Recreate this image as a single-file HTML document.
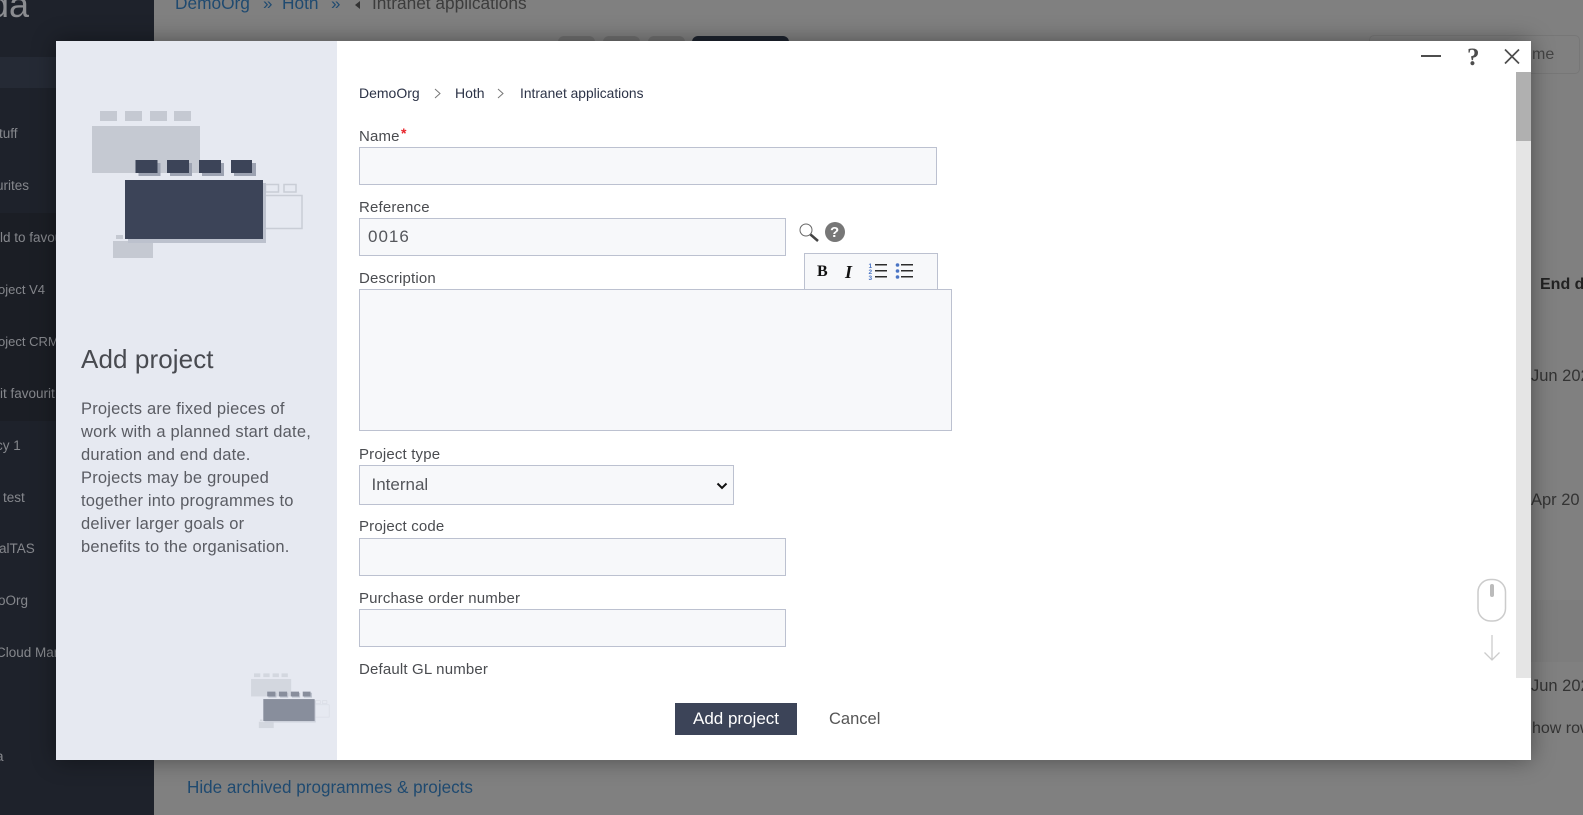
<!DOCTYPE html>
<html><head><meta charset="utf-8"><title>Add project</title>
<style>
html,body{margin:0;padding:0;width:1583px;height:815px;overflow:hidden;background:#808080;font-family:"Liberation Sans",sans-serif}
.a{position:absolute;white-space:nowrap;line-height:1}
#side{position:absolute;left:0;top:0;width:154px;height:815px;background:#1e222b;overflow:hidden}
#side .a{color:#85878c;font-size:13.5px}
.lab{position:absolute;left:359px;color:#4a4c50;font-size:15px;line-height:18px;white-space:nowrap;letter-spacing:.17px}
.inp{position:absolute;box-sizing:border-box;background:#f7f8fa;border:1px solid #bcc1d0}
.bc{position:absolute;top:85px;color:#2c3347;font-size:14px;line-height:16px;white-space:nowrap}
.p{position:absolute;left:81px;color:#5a5c63;font-size:16.5px;line-height:23px;white-space:nowrap;letter-spacing:.2px}
</style></head><body>
<div id="side">
<div style="position:absolute;left:0;top:57px;width:154px;height:31px;background:#252a35"></div>
<div style="position:absolute;left:0;top:213px;width:154px;height:208px;background:#1b1e25"></div>
<div class="a" style="left:-11px;top:-13px;font-size:36px;color:#8b8c90">da</div>
<div class="a" style="left:-1px;top:127px">tuff</div>
<div class="a" style="left:-4px;top:179px">urites</div>
<div class="a" style="left:0;top:231px">ld to favou</div>
<div class="a" style="left:-2px;top:283px;font-size:13px">oject V4</div>
<div class="a" style="left:-2px;top:335px;font-size:13px">oject CRM</div>
<div class="a" style="left:0;top:387px">it favourit</div>
<div class="a" style="left:-4px;top:439px">cy 1</div>
<div class="a" style="left:3px;top:491px">test</div>
<div class="a" style="left:-1px;top:542px">alTAS</div>
<div class="a" style="left:-2px;top:594px">oOrg</div>
<div class="a" style="left:-4px;top:646px">Cloud Man</div>
<div class="a" style="left:-4px;top:750px">a</div>
</div>

<!-- background page -->
<div class="a" style="left:175px;top:-5px;font-size:17.300px;color:#1f4a70">DemoOrg</div>
<div class="a" style="left:263px;top:-5px;font-size:17px;color:#1f4a70">»</div>
<div class="a" style="left:282px;top:-5px;font-size:17.300px;color:#1f4a70">Hoth</div>
<div class="a" style="left:331px;top:-5px;font-size:17px;color:#1f4a70">»</div>
<div class="a" style="left:372px;top:-5px;font-size:17.300px;color:#3c3c3c">Intranet applications</div>
<div style="position:absolute;left:355px;top:1px;width:0;height:0;border:4px solid transparent;border-right:5px solid #333;border-left:0"></div>
<div style="position:absolute;left:558px;top:36px;width:37px;height:10px;background:#707070;border-radius:6px 6px 0 0"></div>
<div style="position:absolute;left:603px;top:36px;width:37px;height:10px;background:#707070;border-radius:6px 6px 0 0"></div>
<div style="position:absolute;left:648px;top:36px;width:37px;height:10px;background:#707070;border-radius:6px 6px 0 0"></div>
<div style="position:absolute;left:692px;top:36px;width:97px;height:10px;background:#1d232e;border-radius:6px 6px 0 0"></div>
<div style="position:absolute;box-sizing:border-box;left:1369px;top:35px;width:211px;height:39px;border:1px solid #777;border-radius:5px"></div>
<div class="a" style="left:1532px;top:47px;font-size:16px;color:#444">me</div>
<div style="position:absolute;left:1531px;top:600px;width:52px;height:62px;background:#7d7d7d"></div>
<div style="position:absolute;left:0;top:760px;width:1583px;height:55px;background:#7b7b7b;z-index:-1"></div>
<div class="a" style="left:1540px;top:277px;font-size:16px;color:#222;font-weight:bold">End d</div>
<div class="a" style="left:1531px;top:368px;font-size:16.500px;color:#333">Jun 202</div>
<div class="a" style="left:1531px;top:492px;font-size:16.500px;color:#333">Apr 20</div>
<div class="a" style="left:1531px;top:678px;font-size:16.500px;color:#333">Jun 202</div>
<div class="a" style="left:1532px;top:721px;font-size:16px;color:#333">how row</div>
<div class="a" style="left:187px;top:779px;font-size:17.100px;color:#1f4a70">Hide archived programmes &amp; projects</div>

<!-- modal -->
<div style="position:absolute;left:56px;top:41px;width:1475px;height:719px;background:#fff;box-shadow:0 0 22px rgba(0,0,0,.4)"></div>
<div style="position:absolute;left:56px;top:41px;width:281px;height:719px;background:#e6e9f1"></div>

<div style="position:absolute;left:1516px;top:72px;width:15px;height:606px;background:#e5e5e5"></div>
<div style="position:absolute;left:1516px;top:72px;width:15px;height:69px;background:#b0b0b0"></div>

<div class="a" style="left:81px;top:346px;font-size:26px;color:#484a50;letter-spacing:.1px">Add project</div>
<div class="p" style="top:397.500px">Projects are fixed pieces of</div>
<div class="p" style="top:420.500px">work with a planned start date,</div>
<div class="p" style="top:443.500px">duration and end date.</div>
<div class="p" style="top:466.500px">Projects may be grouped</div>
<div class="p" style="top:489.500px">together into programmes to</div>
<div class="p" style="top:512.500px">deliver larger goals or</div>
<div class="p" style="top:535.500px">benefits to the organisation.</div>

<div class="bc" style="left:359px">DemoOrg</div>
<div class="bc" style="left:455px">Hoth</div>
<div class="bc" style="left:520px;top:86px;font-size:13.800px">Intranet applications</div>

<div class="lab" style="top:128px">Name<span style="position:absolute;left:42px;top:-4px;color:#e8252b;font-size:14px;font-weight:bold">*</span></div>
<div class="inp" style="left:359px;top:147px;width:578px;height:38px"></div>
<div class="lab" style="top:199px">Reference</div>
<div class="inp" style="left:359px;top:218px;width:427px;height:38px"></div>
<div class="a" style="left:368px;top:228px;font-size:17px;color:#55575c;letter-spacing:1px">0016</div>
<div class="lab" style="top:270px">Description</div>
<div class="inp" style="left:804px;top:253px;width:134px;height:38px"></div>
<div class="inp" style="left:359px;top:289px;width:593px;height:142px"></div>
<div class="a" style="left:817px;top:264px;font-size:16px;font-weight:bold;color:#111;font-family:'Liberation Serif',serif">B</div>
<div class="a" style="left:845px;top:263px;font-size:18px;font-weight:bold;font-style:italic;color:#111;font-family:'Liberation Serif',serif">I</div>

<div class="lab" style="top:446px">Project type</div>
<div class="inp" style="left:359px;top:465px;width:375px;height:40px"></div>
<div class="a" style="left:371.500px;top:476px;font-size:17px;color:#55575c">Internal</div>
<div class="lab" style="top:518px">Project code</div>
<div class="inp" style="left:359px;top:538px;width:427px;height:38px"></div>
<div class="lab" style="top:590px">Purchase order number</div>
<div class="inp" style="left:359px;top:609px;width:427px;height:38px"></div>
<div class="lab" style="top:661px">Default GL number</div>

<svg style="position:absolute;left:0;top:0" width="1583" height="815" viewBox="0 0 1583 815">
<defs><g id="lego">
<g fill="#c5c9d2"><rect x="100" y="111" width="17" height="10"/><rect x="125" y="111" width="17" height="10"/><rect x="150" y="111" width="17" height="10"/><rect x="174" y="111" width="17" height="10"/>
<rect x="92" y="126" width="108" height="47"/><rect x="113" y="241" width="40" height="17"/><rect x="116" y="235" width="7" height="4"/></g>
<g fill="none" stroke="#c9cdd6" stroke-width="1.500"><rect x="255" y="195.500" width="47" height="33"/><rect x="265.500" y="184.500" width="13" height="7.500"/><rect x="284" y="184.500" width="12" height="7.500"/></g>
<g fill="#9da3b2"><rect x="138.500" y="163" width="22" height="13"/><rect x="170" y="163" width="22" height="13"/><rect x="202" y="163" width="22" height="13"/><rect x="234" y="163" width="22" height="13"/></g>
<rect x="128" y="183" width="138" height="60" fill="#bcc1cd"/>
<g fill="#3c4458"><rect x="135.500" y="160" width="22" height="13"/><rect x="167" y="160" width="22" height="13"/><rect x="199" y="160" width="22" height="13"/><rect x="231" y="160" width="21" height="13"/><rect x="125" y="180" width="138" height="59"/></g>
</g></defs>
<use href="#lego"/>
<g opacity=".55" transform="translate(216.800 632.100) scale(.372)"><use href="#lego"/></g>
<!-- window controls -->
<rect x="1421" y="55" width="20" height="2" fill="#4d4d4d"/>
<path d="M1505 49.500L1519 63.500M1519 49.500L1505 63.500" stroke="#4d4d4d" stroke-width="1.700" fill="none"/>
<!-- breadcrumb chevrons -->
<path d="M435 89L440 93.500L435 98M498 89L503 93.500L498 98" stroke="#777" stroke-width="1" fill="none"/>
<!-- mouse icon -->
<rect x="1478" y="579.500" width="27.500" height="41.500" rx="12.500" fill="#fff" stroke="#ccc" stroke-width="1.500"/>
<rect x="1490" y="584" width="4" height="13" rx="2" fill="#bbb"/>
<path d="M1492 635V660M1484.500 652.500L1492 660L1499.500 652.500" stroke="#ccc" stroke-width="1.300" fill="none"/>
<!-- magnifier -->
<circle cx="806" cy="230" r="6" fill="#fff" stroke="#666" stroke-width="1"/>
<path d="M810.500 234.500L818 241" stroke="#444" stroke-width="2.500"/>
<circle cx="835" cy="232" r="10" fill="#777"/>
<!-- toolbar icons -->
<g fill="#2c2c2c"><rect x="875" y="264" width="12" height="1.500"/><rect x="875" y="270" width="12" height="1.500"/><rect x="875" y="276" width="12" height="1.500"/><rect x="901" y="264" width="12" height="1.500"/><rect x="901" y="270" width="12" height="1.500"/><rect x="901" y="276" width="12" height="1.500"/></g>
<g fill="#4a74c4" font-family="Liberation Sans, sans-serif" font-size="6.500" font-weight="bold"><text x="868.500" y="268">1</text><text x="868.500" y="274">2</text><text x="868.500" y="280">3</text><circle cx="897.500" cy="265" r="1.800"/><circle cx="897.500" cy="271" r="1.800"/><circle cx="897.500" cy="277" r="1.800"/></g>
<!-- select arrow -->
<path d="M717.500 483.500L722 488L726.500 483.500" stroke="#111" stroke-width="2" fill="none"/>
</svg>

<div class="a" style="left:1467px;top:45px;font-size:25px;font-weight:bold;color:#4d4d4d;font-family:'Liberation Serif',serif">?</div>
<div class="a" style="left:830px;top:225px;font-size:15px;color:#fff;font-weight:bold">?</div>

<div style="position:absolute;left:675px;top:703px;width:122px;height:32px;background:#3c4458;color:#fff;font-size:17px;line-height:32px;text-align:center">Add project</div>
<div class="a" style="left:829px;top:711px;font-size:16.500px;color:#555">Cancel</div>
</body></html>
